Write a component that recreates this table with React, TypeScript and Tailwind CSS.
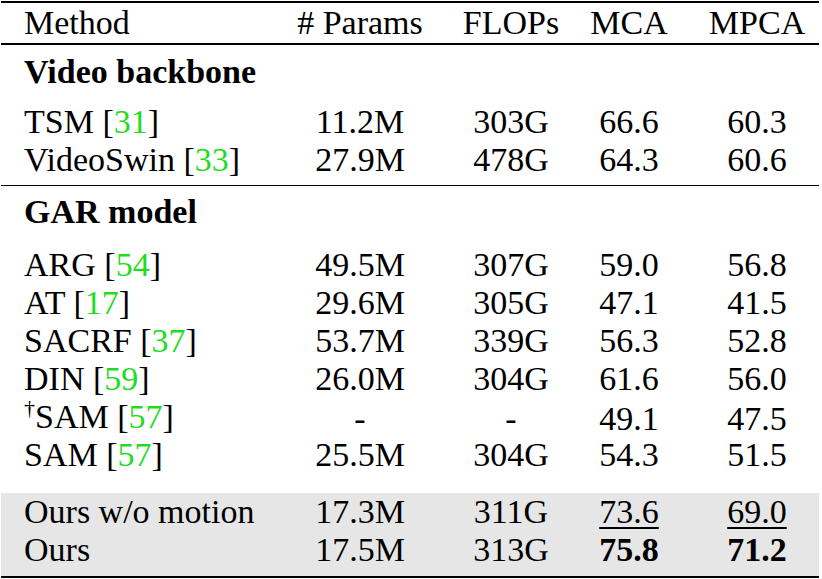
import React from "react";

type Row = {
  name: React.ReactNode;
  params: string;
  flops: string;
  mca: React.ReactNode;
  mpca: React.ReactNode;
};

const Cite = ({ n }: { n: string }) => (
  <>
    [<span className="text-[#1fdc1f]">{n}</span>]
  </>
);

const Cells = ({ r, h = "h-[38px] leading-[38px]" }: { r: Row; h?: string }) => (
  <div className={`grid grid-cols-[285px_148px_154px_82px_149px] items-center ${h}`}>
    <div className="pl-[23px] whitespace-nowrap">{r.name}</div>
    <div className="text-center">{r.params}</div>
    <div className="text-center">{r.flops}</div>
    <div className="text-center">{r.mca}</div>
    <div className="text-center pl-[25px]">{r.mpca}</div>
  </div>
);

const backbone: Row[] = [
  { name: <>TSM <Cite n="31" /></>, params: "11.2M", flops: "303G", mca: "66.6", mpca: "60.3" },
  { name: <>VideoSwin <Cite n="33" /></>, params: "27.9M", flops: "478G", mca: "64.3", mpca: "60.6" },
];

const gar: Row[] = [
  { name: <>ARG <Cite n="54" /></>, params: "49.5M", flops: "307G", mca: "59.0", mpca: "56.8" },
  { name: <>AT <Cite n="17" /></>, params: "29.6M", flops: "305G", mca: "47.1", mpca: "41.5" },
  { name: <>SACRF <Cite n="37" /></>, params: "53.7M", flops: "339G", mca: "56.3", mpca: "52.8" },
  { name: <>DIN <Cite n="59" /></>, params: "26.0M", flops: "304G", mca: "61.6", mpca: "56.0" },
  {
    name: (
      <>
        <span className="relative top-[-13px] text-[22px]">†</span>SAM <Cite n="57" />
      </>
    ),
    params: "-",
    flops: "-",
    mca: "49.1",
    mpca: "47.5",
  },
  { name: <>SAM <Cite n="57" /></>, params: "25.5M", flops: "304G", mca: "54.3", mpca: "51.5" },
];

const ours: Row[] = [
  {
    name: "Ours w/o motion",
    params: "17.3M",
    flops: "311G",
    mca: <span className="underline decoration-[1.5px] underline-offset-[4px]">73.6</span>,
    mpca: <span className="underline decoration-[1.5px] underline-offset-[4px]">69.0</span>,
  },
  {
    name: "Ours",
    params: "17.5M",
    flops: "313G",
    mca: <span className="font-bold">75.8</span>,
    mpca: <span className="font-bold">71.2</span>,
  },
];

export default function App() {
  return (
    <div className="w-[822px] h-[579px] bg-white text-black font-['Liberation_Serif',serif] text-[34px] overflow-hidden">
      <div className="w-[818px] ml-[1px] pt-[1px]">
        <div className="h-[2px] bg-black" />
        <Cells
          r={{ name: "Method", params: "# Params", flops: "FLOPs", mca: "MCA", mpca: "MPCA" }}
          h="h-[40px] leading-[40px]"
        />
        <div className="h-[1.5px] bg-black" />
        <div className="h-[38px] mt-[8.5px] leading-[38px] pl-[23px] font-bold">Video backbone</div>
        <div className="h-[12px]" />
        {backbone.map((r, i) => (
          <Cells key={i} r={r} />
        ))}
        <div className="h-[5.5px]" />
        <div className="h-[1.5px] bg-black" />
        <div className="h-[38px] mt-[6.5px] leading-[38px] pl-[23px] font-bold">GAR model</div>
        <div className="h-[15px]" />
        {gar.map((r, i) => (
          <Cells key={i} r={r} />
        ))}
        <div className="h-[19px]" />
        <div className="bg-[#e6e6e6] pb-[7px]">
          {ours.map((r, i) => (
            <Cells key={i} r={r} />
          ))}
        </div>
        <div className="h-[2px] bg-black" />
      </div>
    </div>
  );
}
